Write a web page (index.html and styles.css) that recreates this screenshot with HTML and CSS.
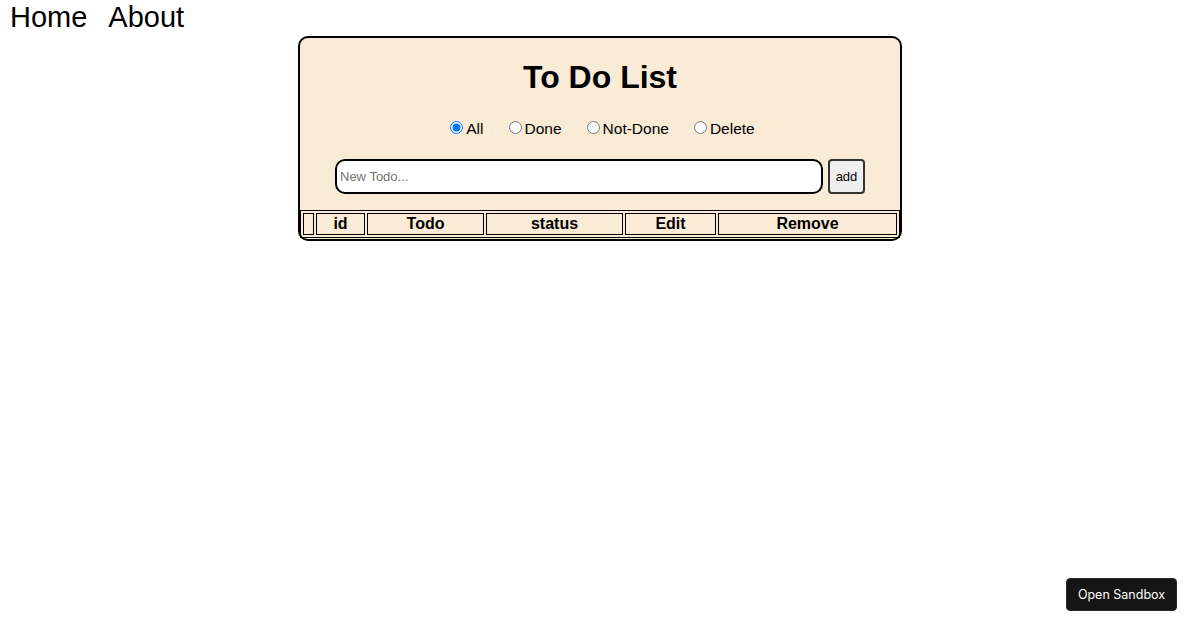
FILE: index.html
```html
<!DOCTYPE html>
<html>
<head>
<meta charset="utf-8">
<link rel="stylesheet" href="styles.css">
</head>
<body>
<nav class="nav">
  <a class="nav-link" href="#">Home</a>
  <a class="nav-link" href="#">About</a>
</nav>
<div class="card">
  <h1 class="title">To Do List</h1>
  <div class="filters">
    <label class="filter"><input type="radio" name="f" checked>All</label>
    <label class="filter"><input type="radio" name="f">Done</label>
    <label class="filter"><input type="radio" name="f">Not-Done</label>
    <label class="filter"><input type="radio" name="f">Delete</label>
  </div>
  <div class="add-row">
    <input class="todo-input" type="text" placeholder="New Todo...">
    <button class="add-btn">add</button>
  </div>
  <table class="todo-table">
    <thead>
      <tr>
        <th class="c0"></th>
        <th class="c1">id</th>
        <th class="c2">Todo</th>
        <th class="c3">status</th>
        <th class="c4">Edit</th>
        <th class="c5">Remove</th>
      </tr>
    </thead>
  </table>
</div>
<button class="sandbox-btn">Open Sandbox</button>
</body>
</html>
```
FILE: styles.css
```css
html, body {
  margin: 0;
  padding: 0;
  background: #fff;
  font-family: "Liberation Sans", Arial, sans-serif;
  color: #000;
}
.nav {
  display: flex;
  gap: 21px;
  padding: 1px 0 0 10px;
  height: 36px;
  box-sizing: border-box;
}
.nav-link {
  font-size: 29px;
  line-height: 33px;
  color: #000;
  text-decoration: none;
}
.card {
  box-sizing: border-box;
  width: 604px;
  margin: 0 auto;
  padding-bottom: 1px;
  background: #faebd7;
  border: 2px solid #000;
  border-radius: 10px;
  display: flex;
  flex-direction: column;
  align-items: center;
}
.title {
  margin: 19px 0 0;
  font-size: 32px;
  font-weight: bold;
  line-height: 40px;
}
.filters {
  display: flex;
  gap: 20px;
  margin-top: 21px;
  font-size: 15.5px;
  line-height: 18px;
}
.filter input {
  margin: 3px 3px 0 5px;
  width: 13px;
  height: 13px;
}
.add-row {
  display: flex;
  gap: 5px;
  margin-top: 21px;
}
.todo-input {
  box-sizing: border-box;
  width: 488px;
  height: 35px;
  border: 2px solid #000;
  border-radius: 10px;
  padding: 0 3px;
  font-family: "Liberation Sans", Arial, sans-serif;
  font-size: 13px;
  background: #fff;
  outline: none;
}
.todo-input::placeholder {
  color: #757575;
}
.add-btn {
  box-sizing: border-box;
  width: 37px;
  height: 35px;
  padding: 0;
  background: #efefef;
  border: 2px solid #333;
  border-radius: 4px;
  font-family: "Liberation Sans", Arial, sans-serif;
  font-size: 13px;
  color: #000;
}
.todo-table {
  width: 100%;
  margin-top: 16px;
  border: 1px solid #000;
  border-spacing: 2px;
  table-layout: fixed;
}
.todo-table th {
  box-sizing: border-box;
  border: 1px solid #000;
  padding: 1px;
  font-size: 16px;
  line-height: 18px;
  font-weight: bold;
}
.c0 { width: 11px; }
.c1 { width: 49px; }
.c2 { width: 117px; }
.c3 { width: 137px; }
.c4 { width: 91px; }
.c5 { width: 179px; }
.sandbox-btn {
  position: fixed;
  right: 23px;
  bottom: 19px;
  width: 111px;
  height: 33px;
  background: #151515;
  color: #fff;
  border: 1px solid #2a2a2a;
  border-radius: 4px;
  font-family: Inter, "Liberation Sans", sans-serif;
  font-size: 12.5px;
  padding: 0;
}
```
